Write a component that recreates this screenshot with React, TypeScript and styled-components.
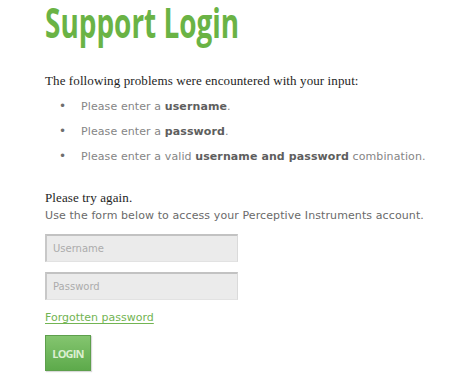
import styled, { createGlobalStyle } from 'styled-components'

const GlobalStyle = createGlobalStyle`
  body {
    margin: 0;
    background: #fff;
  }
`

const Page = styled.div`
  padding: 1px 0 0 45px;
  width: 474px;
  height: 384px;
  box-sizing: border-box;
  overflow: hidden;
`

const Title = styled.h1`
  margin: -4px 0 0;
  font-family: 'Open Sans', sans-serif;
  font-weight: 700;
  font-size: 42px;
  line-height: 50px;
  color: #6ab345;
  white-space: nowrap;

  span {
    display: inline-block;
    transform: scaleX(0.665);
    transform-origin: left center;
  }
`

const SerifText = styled.p<{ $top: number }>`
  margin: ${(p) => p.$top}px 0 0;
  font-family: 'Liberation Serif', serif;
  font-size: 13px;
  line-height: 15px;
  letter-spacing: 0.1px;
  color: #1e1e1e;
`

const Problems = styled.ul`
  list-style: none;
  margin: 6px 0 0;
  padding: 0 0 0 14px;
`

const Problem = styled.li`
  font-family: 'DejaVu Sans', sans-serif;
  font-size: 11px;
  line-height: 25px;
  color: #858585;
  letter-spacing: 0.1px;

  &::before {
    content: '•';
    display: inline-block;
    width: 22px;
    color: #6e6e6e;
    font-size: 12px;
  }

  b {
    color: #5e5e5e;
    font-weight: 700;
  }
`

const Hint = styled.p`
  margin: 2px 0 0;
  font-family: 'DejaVu Sans', sans-serif;
  font-size: 11px;
  line-height: 18px;
  letter-spacing: 0.1px;
  color: #6a6a6a;
`

const Form = styled.form`
  display: flex;
  flex-direction: column;
  align-items: flex-start;
  gap: 10px;
  margin-top: 9px;
`

const Field = styled.input`
  width: 193px;
  height: 28px;
  box-sizing: border-box;
  margin: 0;
  padding: 0 6px;
  background: #ebebeb;
  border-top: 2px solid #c2c2c2;
  border-left: 2px solid #c8c8c8;
  border-right: 1px solid #dadada;
  border-bottom: 1px solid #e2e2e2;
  font-family: 'DejaVu Sans', sans-serif;
  font-size: 10px;
  color: #555;
  outline: none;

  &::placeholder {
    color: #ababab;
  }
`

const ForgotLink = styled.a`
  margin-top: 0;
  font-family: 'DejaVu Sans', sans-serif;
  font-size: 11px;
  line-height: 16px;
  color: #72b452;
  text-decoration: underline;
  text-underline-offset: 2px;
`

const LoginButton = styled.button`
  width: 46px;
  height: 36px;
  margin: -1px 0 0;
  padding: 0;
  border: 1px solid #5d9f4c;
  background: linear-gradient(#84c56f, #5daa4b);
  box-shadow: 1px 1px 1px rgba(0, 0, 0, 0.15);
  font-family: 'Open Sans', sans-serif;
  font-weight: 700;
  font-size: 11px;
  letter-spacing: -0.8px;
  color: #dcefd2;
`

export default function App() {
  return (
    <Page>
      <GlobalStyle />
      <Title>
        <span>Support Login</span>
      </Title>
      <SerifText $top={26}>The following problems were encountered with your input:</SerifText>
      <Problems>
        <Problem>
          Please enter a <b>username</b>.
        </Problem>
        <Problem>
          Please enter a <b>password</b>.
        </Problem>
        <Problem>
          Please enter a valid <b>username and password</b> combination.
        </Problem>
      </Problems>
      <SerifText $top={21}>Please try again.</SerifText>
      <Hint>Use the form below to access your Perceptive Instruments account.</Hint>
      <Form onSubmit={(e) => e.preventDefault()}>
        <Field type="text" placeholder="Username" />
        <Field type="password" placeholder="Password" />
        <ForgotLink href="#">Forgotten password</ForgotLink>
        <LoginButton type="submit">LOGIN</LoginButton>
      </Form>
    </Page>
  )
}
